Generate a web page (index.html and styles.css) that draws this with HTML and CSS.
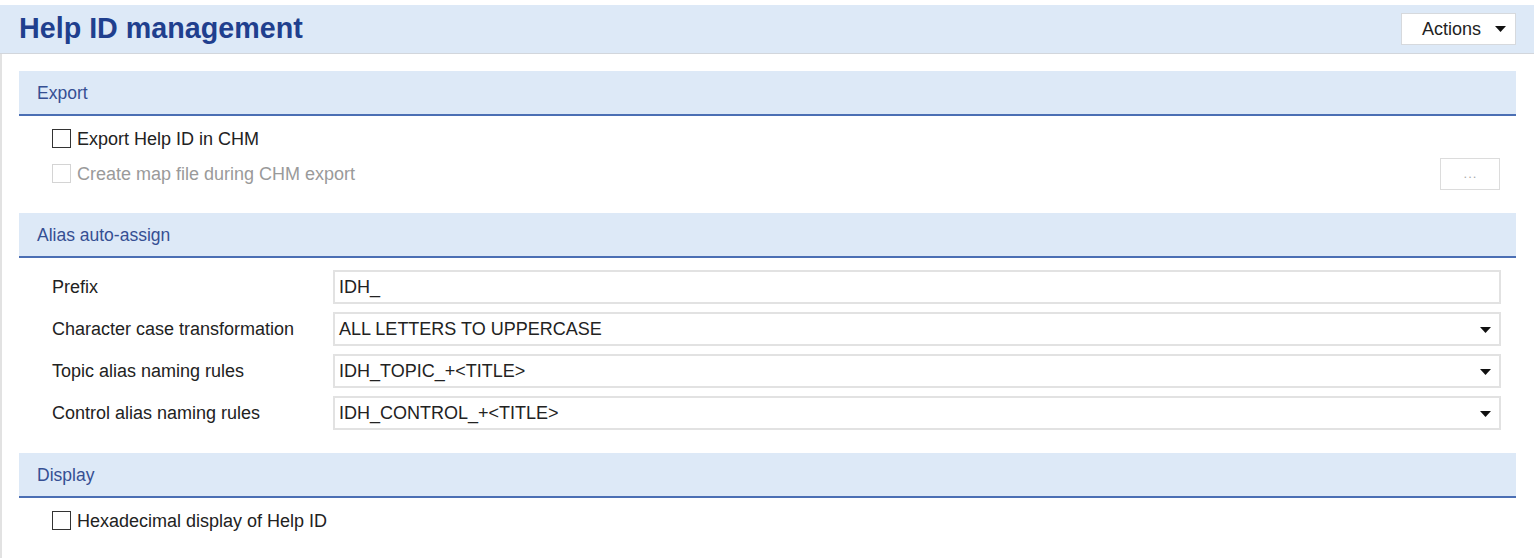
FILE: index.html
```html
<!DOCTYPE html>
<html>
<head>
<meta charset="utf-8">
<link rel="stylesheet" href="styles.css">
<title>Help ID management</title>
</head>
<body>
<div class="page">
  <header class="topbar">
    <h1 class="title">Help ID management</h1>
    <button class="actions">Actions <svg class="caret" width="11" height="6" viewBox="0 0 11 6"><path d="M0 0h11L5.5 6z"/></svg></button>
  </header>
  <main class="content">
    <section class="section">
      <div class="section-head">Export</div>
      <div class="section-body checks">
        <div class="check-row">
          <span class="box"></span><span class="check-label">Export Help ID in CHM</span>
        </div>
        <div class="check-row disabled">
          <span class="box"></span><span class="check-label">Create map file during CHM export</span>
          <button class="dots">...</button>
        </div>
      </div>
    </section>
    <section class="section">
      <div class="section-head">Alias auto-assign</div>
      <div class="section-body form">
        <label class="form-label">Prefix</label>
        <div class="field">IDH_</div>
        <label class="form-label">Character case transformation</label>
        <div class="field select"><span>ALL LETTERS TO UPPERCASE</span><svg class="caret" width="11" height="6" viewBox="0 0 11 6"><path d="M0 0h11L5.5 6z"/></svg></div>
        <label class="form-label">Topic alias naming rules</label>
        <div class="field select"><span>IDH_TOPIC_+&lt;TITLE&gt;</span><svg class="caret" width="11" height="6" viewBox="0 0 11 6"><path d="M0 0h11L5.5 6z"/></svg></div>
        <label class="form-label">Control alias naming rules</label>
        <div class="field select"><span>IDH_CONTROL_+&lt;TITLE&gt;</span><svg class="caret" width="11" height="6" viewBox="0 0 11 6"><path d="M0 0h11L5.5 6z"/></svg></div>
      </div>
    </section>
    <section class="section">
      <div class="section-head">Display</div>
      <div class="section-body checks">
        <div class="check-row">
          <span class="box"></span><span class="check-label">Hexadecimal display of Help ID</span>
        </div>
      </div>
    </section>
  </main>
</div>
</body>
</html>
```

FILE: styles.css
```css
* { box-sizing: border-box; }
html, body { margin: 0; padding: 0; background: #fff; }
body {
  font-family: "Liberation Sans", Arial, sans-serif;
  color: #222;
  font-size: 18px;
}
.page {
  padding-top: 5px;
  min-height: 558px;
  display: flex;
  flex-direction: column;
}
.topbar {
  flex: none;
  height: 49px;
  background: #dde9f7;
  border-bottom: 1px solid #d2d6dc;
  display: flex;
  align-items: center;
  justify-content: space-between;
  padding: 0 18px 2px 19px;
}
.title {
  margin: 0;
  font-size: 28.7px;
  font-weight: bold;
  color: #1f3f8e;
  letter-spacing: 0;
}
.actions {
  width: 115px;
  height: 32px;
  background: #fff;
  border: 1px solid #d6d9dd;
  font: inherit;
  font-size: 18px;
  color: #222;
  display: flex;
  align-items: center;
  justify-content: flex-end;
  gap: 14px;
  padding: 0 9px 0 0;
  margin-top: 2px;
}
.caret path { fill: #111; }
.content {
  flex: 1;
  border-left: 2px solid #e2e2e2;
  padding: 17px 18px 0 17px;
}
.section-head {
  height: 45px;
  background: #dde9f7;
  border-bottom: 2px solid #4b6fb4;
  color: #354f93;
  font-size: 17.5px;
  padding: 2px 0 0 18px;
  display: flex;
  align-items: center;
}
.checks {
  padding: 5px 14px 22px 33px;
}
.check-row {
  height: 35px;
  display: flex;
  align-items: center;
  gap: 6px;
}
.box {
  width: 19px;
  height: 19px;
  border: 1.5px solid #333;
  background: #fff;
  flex: none;
}
.check-label { font-size: 18px; color: #222; padding-top: 1px; }
.disabled .box { border-color: #d4d4d4; }
.disabled .check-label { color: #9a9a9a; }
.dots {
  margin-left: auto;
  margin-right: 2px;
  width: 60px;
  height: 32px;
  background: #fff;
  border: 1px solid #dcdcdc;
  color: #aaa;
  font: inherit;
  font-size: 13px;
  letter-spacing: 1px;
  padding: 0 0 0 1px;
}
.form {
  display: grid;
  grid-template-columns: 281px 1fr;
  row-gap: 8px;
  padding: 12px 15px 23px 33px;
}
.form-label {
  display: flex;
  align-items: center;
  font-size: 18px;
  color: #222;
  padding-top: 1px;
}
.field {
  height: 34px;
  border: 2px solid #e2e2e2;
  background: #fff;
  display: flex;
  align-items: center;
  padding: 1px 8px 0 4px;
  font-size: 18px;
  color: #222;
}
.select { justify-content: space-between; }
.select .caret { margin-right: 0; }
```
